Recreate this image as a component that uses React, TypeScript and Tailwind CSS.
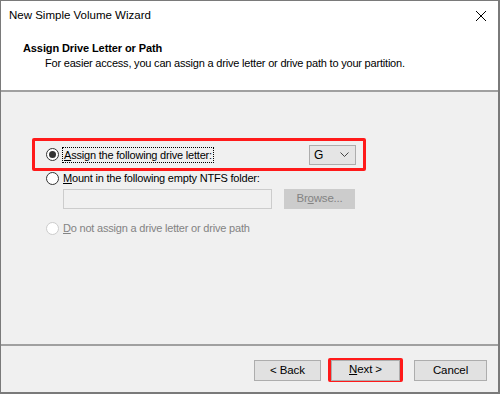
import React from 'react';

const FONT = { fontFamily: '"Liberation Sans", Arial, sans-serif' };

function Radio({ checked, disabled }: { checked?: boolean; disabled?: boolean }) {
  return (
    <span
      className={`flex h-[13px] w-[13px] shrink-0 items-center justify-center rounded-full border bg-white ${
        disabled ? 'border-[#cccccc]' : 'border-[#333333]'
      }`}
    >
      {checked && <span className="h-[7px] w-[7px] rounded-full bg-[#333333]" />}
    </span>
  );
}

function WinButton({ children, className = '' }: { children: React.ReactNode; className?: string }) {
  return (
    <div
      className={`flex h-[21px] items-center justify-center border border-[#adadad] bg-[#e1e1e1] text-[11.5px] tracking-[-0.1px] text-black ${className}`}
    >
      {children}
    </div>
  );
}

export default function App() {
  return (
    <div
      className="flex h-[394px] w-[500px] flex-col overflow-hidden border-l border-t border-r-2 border-b-2 border-[#7a7a7a] bg-[#f0f0f0] text-[11px] tracking-[-0.2px] text-black"
      style={FONT}
    >
      {/* Title bar + header */}
      <div className="flex h-[89px] flex-col bg-white">
        <div className="flex h-[30px] items-center justify-between pl-[8px] pr-[9px]">
          <span className="text-[11.5px] tracking-[0px] text-black">New Simple Volume Wizard</span>
          <svg width="12" height="12" viewBox="0 0 12 12" className="mr-[2px]">
            <path d="M1 1 L11 11 M11 1 L1 11" stroke="#000" strokeWidth="1" />
          </svg>
        </div>
        <div className="pl-[22px] pt-[10px]">
          <div className="text-[11px] font-bold leading-[15px] tracking-[-0.1px]">Assign Drive Letter or Path</div>
          <div className="pl-[22px] leading-[15px]">
            For easier access, you can assign a drive letter or drive path to your partition.
          </div>
        </div>
      </div>
      <div className="h-[2px] bg-[#a0a0a0]" />

      {/* Body */}
      <div className="flex flex-1 flex-col pl-[31px] pt-[46px]">
        <div className="flex h-[33px] w-[334px] items-center rounded-[2px] border-[3px] border-[#ff1a1a] pl-[11px] pr-[7px]">
          <Radio checked />
          <span className="ml-[3px] border border-dotted border-black px-[1px] leading-[14px]">
            <span className="underline">A</span>ssign the following drive letter:
          </span>
          <div className="ml-auto flex h-[20px] w-[47px] items-center justify-between border border-[#adadad] bg-[#e5e5e5] pl-[4px] pr-[6px] text-[12px]">
            <span>G</span>
            <svg width="9" height="6" viewBox="0 0 9 6">
              <path d="M0.5 0.5 L4.5 4.5 L8.5 0.5" stroke="#444" strokeWidth="1" fill="none" />
            </svg>
          </div>
        </div>

        <div className="flex h-[15px] items-center pl-[14px]">
          <Radio />
          <span className="ml-[4px]">
            <span className="underline">M</span>ount in the following empty NTFS folder:
          </span>
        </div>
        <div className="mt-[3px] flex items-center pl-[31px]">
          <div className="h-[20px] w-[209px] border border-[#cccccc] bg-[#f0f0f0]" />
          <div className="ml-[12px] flex h-[20px] w-[71px] items-center justify-center border border-[#cccccc] bg-[#cccccc] text-[11.5px] text-[#838383]">
            Br<span className="underline">o</span>wse...
          </div>
        </div>

        <div className="mt-[12px] flex h-[15px] items-center pl-[14px] text-[#838383]">
          <Radio disabled />
          <span className="ml-[4px]">
            <span className="underline">D</span>o not assign a drive letter or drive path
          </span>
        </div>
      </div>

      <div className="h-[2px] bg-[#a0a0a0]" />
      {/* Footer */}
      <div className="flex h-[46px] items-start pl-[253px] pt-[14px]">
        <WinButton className="w-[67px]">&lt; Back</WinButton>
        <div className="ml-[7px] mt-[-2px] flex h-[24px] items-center rounded-[2px] border-[3px] border-[#ff1a1a]">
          <WinButton className="h-[18px] w-[69px]">
            <span className="underline">N</span>ext &gt;
          </WinButton>
        </div>
        <WinButton className="ml-[11px] w-[73px]">Cancel</WinButton>
      </div>
    </div>
  );
}
